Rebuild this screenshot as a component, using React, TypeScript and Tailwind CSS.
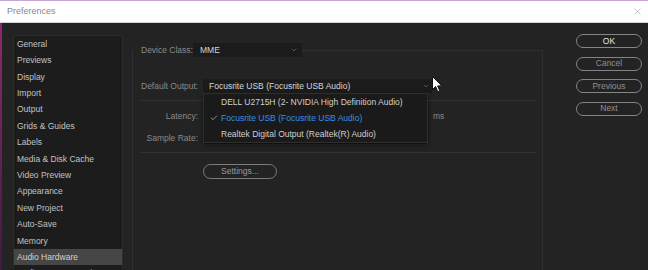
import { ChevronDown, Check, X } from 'lucide-react';

const sections = [
  'General',
  'Previews',
  'Display',
  'Import',
  'Output',
  'Grids & Guides',
  'Labels',
  'Media & Disk Cache',
  'Video Preview',
  'Appearance',
  'New Project',
  'Auto-Save',
  'Memory',
  'Audio Hardware',
  'Audio Output Mapping',
];

const outputs = [
  { name: 'DELL U2715H (2- NVIDIA High Definition Audio)', active: false },
  { name: 'Focusrite USB (Focusrite USB Audio)', active: true },
  { name: 'Realtek Digital Output (Realtek(R) Audio)', active: false },
];

function PillButton({ label, strong }: { label: string; strong?: boolean }) {
  return (
    <button
      className={`h-[14px] w-full rounded-full border border-[#858585] text-[8.5px] leading-none ${
        strong ? 'text-[#e6e6e6]' : 'text-[#8f8f8f]'
      }`}
    >
      {label}
    </button>
  );
}

function Cursor() {
  return (
    <svg width="11" height="17" viewBox="0 0 11 17" className="absolute left-[432px] top-[76px]">
      <path
        d="M0.5 0.5 L0.5 13.5 L3.6 10.6 L5.8 15.8 L7.8 15 L5.7 9.9 L9.8 9.9 Z"
        fill="#ffffff"
        stroke="#111111"
        strokeWidth="1"
        strokeLinejoin="round"
      />
    </svg>
  );
}

export default function App() {
  return (
    <div
      className="relative w-[648px] h-[270px] overflow-hidden flex flex-col bg-[#232323] text-[8.5px]"
      style={{ fontFamily: '"Liberation Sans", Arial, sans-serif' }}
    >
      {/* title bar */}
      <div className="h-[23px] shrink-0 bg-white border-t border-t-[#c9a6d6] border-b border-b-[#d4d4d4] flex items-center justify-between pl-[7px] pr-[5px]">
        <span className="text-[9px] text-[#8a8a8a]">Preferences</span>
        <X size={11} strokeWidth={1} className="text-[#8a8a8a]" />
      </div>

      <div className="flex flex-1 min-h-0">
        <div className="w-[2px] shrink-0 bg-gradient-to-b from-[#8e2a6c] to-[#3f1a40]" />

        {/* sidebar */}
        <div className="ml-[11px] mt-[12px] w-[110px] shrink-0 bg-[#1c1c1c] border border-[#2c2c2c] border-b-0">
          {sections.map((s) => (
            <div
              key={s}
              className={`h-[16.4px] flex items-center pl-[3px] ${
                s === 'Audio Hardware' ? 'bg-[#464646] text-[#d2d2d2]' : 'text-[#c2c2c2]'
              }`}
            >
              {s}
            </div>
          ))}
        </div>

        {/* main panel */}
        <div className="ml-[9px] mt-[20px] w-[411px] shrink-0">
          <fieldset className="relative h-[260px] border border-[#2f2f2f] px-0">
            <legend className="flex items-center pl-[8px] pr-0">
              <span className="text-[#8a8a8a] w-[52px]">Device Class:</span>
              <div className="h-[14px] w-[109px] bg-[#1b1b1b] flex items-center justify-between pl-[7px] pr-[4px] text-[#d6d6d6]">
                <span>MME</span>
                <ChevronDown size={8} strokeWidth={1.5} className="text-[#8a8a8a]" />
              </div>
            </legend>

            <div className="px-[8px] pt-[22px] relative">
              <div className="flex items-center h-[14px]">
                <span className="text-[#8a8a8a] w-[62px] shrink-0">Default Output:</span>
                <div className="h-[14px] w-[229px] bg-[#1b1b1b] flex items-center justify-between pl-[6px] pr-[2px] text-[#d6d6d6]">
                  <span>Focusrite USB (Focusrite USB Audio)</span>
                  <ChevronDown size={8} strokeWidth={1.5} className="text-[#8a8a8a]" />
                </div>
              </div>

              <div className="mt-[7px] mr-[-2px] h-px bg-[#333333]" />

              <div className="mt-[9px] flex flex-col gap-[9px]">
                <div className="flex items-center h-[13px]">
                  <span className="text-[#8a8a8a] w-[57px] text-right shrink-0">Latency:</span>
                  <div className="ml-[5px] h-[13px] w-[224px] bg-[#1b1b1b] border border-[#2c2c2c]" />
                  <span className="ml-[6px] text-[#8a8a8a]">ms</span>
                </div>
                <div className="flex items-center h-[13px]">
                  <span className="text-[#8a8a8a] w-[57px] text-right shrink-0">Sample Rate:</span>
                  <div className="ml-[5px] h-[13px] w-[224px] bg-[#1b1b1b] border border-[#2c2c2c]" />
                </div>
              </div>

              <div className="mt-[7px] mr-[-2px] h-px bg-[#333333]" />

              <div className="mt-[11px] pl-[62px]">
                <button className="h-[15px] w-[74px] rounded-full border border-[#7c7c7c] text-[#9a9a9a] leading-none">
                  Settings...
                </button>
              </div>

              {/* open dropdown menu */}
              <div className="absolute left-[70px] top-[36px] w-[225px] h-[50px] bg-[#1a1a1a] border border-[#2e2e2e] shadow-[0_2px_4px_rgba(0,0,0,0.5)] flex flex-col justify-center">
                {outputs.map((o) => (
                  <div
                    key={o.name}
                    className={`h-[16.3px] flex items-center ${o.active ? 'text-[#3a8ee0]' : 'text-[#cfcfcf]'}`}
                  >
                    <span className="w-[17px] flex justify-center pl-[2px]">
                      {o.active && <Check size={8} strokeWidth={2} className="text-[#cfcfcf]" />}
                    </span>
                    <span>{o.name}</span>
                  </div>
                ))}
              </div>
            </div>
          </fieldset>
        </div>

        {/* action buttons */}
        <div className="ml-[33px] mt-[11px] w-[66px] shrink-0 flex flex-col gap-[8.5px]">
          <PillButton label="OK" strong />
          <PillButton label="Cancel" />
          <PillButton label="Previous" />
          <PillButton label="Next" />
        </div>
      </div>

      <Cursor />
    </div>
  );
}
